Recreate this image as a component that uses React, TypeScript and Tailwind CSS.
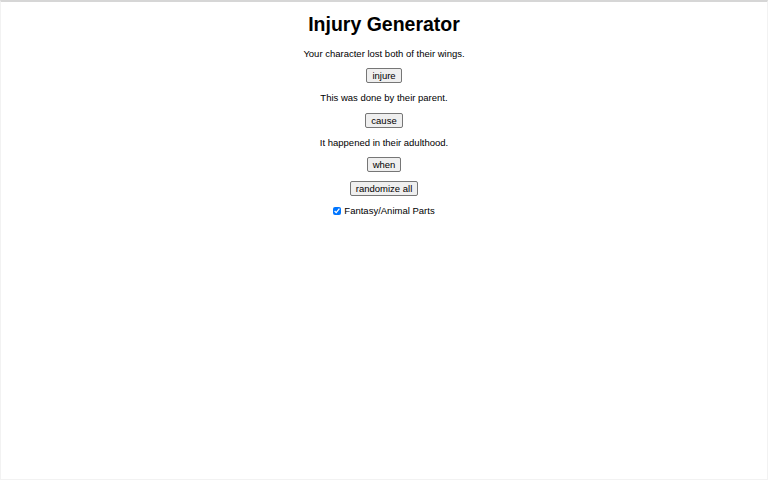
import React, { useState } from "react";

const btn =
  "bg-[#efefef] border border-[#767676] rounded-[2px] px-[5px] h-[15px] leading-[13px] text-[9.5px] text-black";

export default function App() {
  const [fantasy, setFantasy] = useState(true);
  return (
    <div
      className="w-[768px] h-[480px] bg-white border-t-2 border-t-[#d6d6d6] border-x border-b border-x-[#f2f2f2] border-b-[#f2f2f2] text-black"
      style={{ fontFamily: '"Liberation Sans", Arial, sans-serif' }}
    >
      <div className="flex flex-col items-center text-[9.5px]">
        <h1 className="text-[19.5px] font-bold leading-[22px] mt-[11px]">Injury Generator</h1>
        <p className="mt-[13px] leading-[12px]">Your character lost both of their wings.</p>
        <button className={`${btn} mt-[8px]`}>injure</button>
        <p className="mt-[9px] leading-[12px]">This was done by their parent.</p>
        <button className={`${btn} mt-[9px]`}>cause</button>
        <p className="mt-[9px] leading-[12px]">It happened in their adulthood.</p>
        <button className={`${btn} mt-[8px]`}>when</button>
        <button className={`${btn} mt-[9px]`}>randomize all</button>
        <label className="mt-[9px] flex items-center gap-[3px] leading-[12px]">
          <input
            type="checkbox"
            checked={fantasy}
            onChange={(e) => setFantasy(e.target.checked)}
            className="w-[8px] h-[8px] m-0 accent-[#0075ff]"
          />
          Fantasy/Animal Parts
        </label>
      </div>
    </div>
  );
}
